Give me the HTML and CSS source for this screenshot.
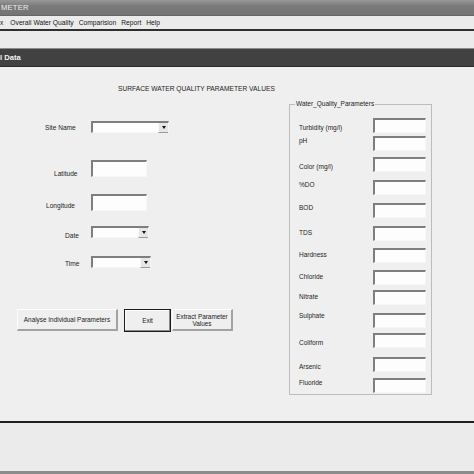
FILE: index.html
```html
<!DOCTYPE html>
<html lang="en">
<head>
  <meta charset="UTF-8" />
  <meta name="viewport" content="width=device-width, initial-scale=1.0"/>
  <title>Water Quality Parameter</title>
  <link rel="stylesheet" href="styles.css">
</head>
<body>
  <div class="window">
    <div class="titlebar">METER</div>

    <div class="menubar">
      <span class="menu-cut">x</span>
      <span>Overall Water Quality</span>
      <span>Comparision</span>
      <span>Report</span>
      <span>Help</span>
    </div>

    <div class="toolbar"></div>

    <div class="caption">l Data</div>

    <div class="content">
      <div class="left">
        <h1>SURFACE WATER QUALITY PARAMETER VALUES</h1>

        <div class="row row-site">
          <label class="lbl lbl-site">Site Name</label>
          <div class="combo combo-site"><span class="drop"><span class="tri"></span></span></div>
        </div>

        <div class="row row-lat">
          <label class="lbl lbl-lat">Latitude</label>
          <input type="text" class="field" />
        </div>

        <div class="row row-lon">
          <label class="lbl lbl-lon">Longitude</label>
          <input type="text" class="field" />
        </div>

        <div class="row row-date">
          <label class="lbl lbl-date">Date</label>
          <div class="combo combo-date"><span class="drop"><span class="tri"></span></span></div>
        </div>

        <div class="row row-time">
          <label class="lbl lbl-time">Time</label>
          <div class="combo combo-time"><span class="drop"><span class="tri"></span></span></div>
        </div>

        <div class="buttons">
          <button class="btn btn-analyse">Analyse Individual Parameters</button>
          <button class="btn btn-exit">Exit</button>
          <button class="btn btn-extract">Extract Parameter<br>Values</button>
        </div>
      </div>

      <fieldset class="params">
        <legend>Water_Quality_Parameters</legend>
        <div class="param-grid">
          <label class="plbl lo">Turbidity (mg/l)</label><input type="text" class="pfield" />
          <label class="plbl hi">pH</label><input type="text" class="pfield" />
          <label class="plbl lo">Color (mg/l)</label><input type="text" class="pfield" />
          <label class="plbl hi">%DO</label><input type="text" class="pfield" />
          <label class="plbl hi">BOD</label><input type="text" class="pfield" />
          <label class="plbl">TDS</label><input type="text" class="pfield" />
          <label class="plbl">Hardness</label><input type="text" class="pfield" />
          <label class="plbl">Chloride</label><input type="text" class="pfield" />
          <label class="plbl">Nitrate</label><input type="text" class="pfield" />
          <label class="plbl top">Sulphate</label><input type="text" class="pfield" />
          <label class="plbl lo">Coliform</label><input type="text" class="pfield" />
          <label class="plbl lo">Arsenic</label><input type="text" class="pfield" />
          <label class="plbl hi">Fluoride</label><input type="text" class="pfield" />
        </div>
      </fieldset>
    </div>

    <div class="status"></div>
    <div class="bottombar"></div>
  </div>
</body>
</html>
```

FILE: styles.css
```css
body {
  margin: 0;
  width: 474px;
  height: 474px;
  overflow: hidden;
  background-color: #efefef;
  font-family: "Liberation Sans", Arial, sans-serif;
  color: #1e1e1e;
}

.window {
  display: flex;
  flex-direction: column;
  height: 474px;
}

.titlebar {
  height: 16px;
  box-sizing: border-box;
  padding: 3px 0 0 1px;
  background: linear-gradient(#989898, #7a7a7a 40%, #747474 100%);
  border-bottom: 1px solid #666;
  color: #eeeeee;
  font-size: 7.6px;
  line-height: 10px;
  letter-spacing: 0.2px;
}

.menubar {
  height: 13px;
  display: flex;
  align-items: center;
  gap: 5px;
  background-color: #ebebeb;
  font-size: 6.7px;
  color: #151515;
}

.menu-cut {
  margin-left: 0;
  margin-right: 2px;
}

.toolbar {
  height: 17px;
  border-top: 2px solid #2f2f2f;
  background-color: #ebebeb;
}

.caption {
  height: 19px;
  box-sizing: border-box;
  border-top: 1px solid #8c8c8c;
  border-bottom: 1px solid #2a2a2a;
  background-color: #414141;
  color: #f2f2f2;
  font-size: 7.6px;
  font-weight: bold;
  line-height: 17px;
}

.content {
  flex: 1;
  display: flex;
  background-color: #efefef;
}

.left {
  width: 289px;
  padding-top: 18px;
}

h1 {
  margin: 0 0 0 118px;
  font-size: 6.65px;
  font-weight: normal;
  line-height: 8px;
  white-space: nowrap;
  color: #222;
}

.row {
  display: flex;
  align-items: flex-start;
}

.row-site { margin-top: 28px; }
.row-lat { margin-top: 27px; }
.row-lon { margin-top: 16px; }
.row-date { margin-top: 15px; }
.row-time { margin-top: 16px; }

.lbl {
  width: 91px;
  box-sizing: border-box;
  font-size: 6.6px;
  line-height: 8px;
  white-space: nowrap;
}

.lbl-site { padding-left: 45px; margin-top: 3px; }
.lbl-lat { padding-left: 54px; margin-top: 10px; }
.lbl-lon { padding-left: 46px; margin-top: 8px; }
.lbl-date { padding-left: 65px; margin-top: 6px; }
.lbl-time { padding-left: 65px; margin-top: 4px; }

.field, .pfield, .combo {
  box-sizing: border-box;
  margin: 0;
  padding: 0;
  background-color: #fdfdfd;
  border-top: 2px solid #7e7e7e;
  border-left: 2px solid #7e7e7e;
  border-right: 1px solid #f6f6f6;
  border-bottom: 1px solid #f6f6f6;
  border-radius: 0;
  outline: none;
}

.field {
  width: 56px;
  height: 17px;
}

.combo {
  height: 12px;
  display: flex;
  justify-content: flex-end;
}

.combo-site { width: 78px; }
.combo-date { width: 58px; }
.combo-time { width: 60px; }

.drop {
  width: 9px;
  height: 9px;
  display: flex;
  align-items: center;
  justify-content: center;
  background-color: #e6e6e6;
  border-left: 1px solid #f8f8f8;
  border-bottom: 1px solid #9a9a9a;
}

.tri {
  width: 0;
  height: 0;
  border-left: 2.5px solid transparent;
  border-right: 2.5px solid transparent;
  border-top: 3px solid #111;
}

.buttons {
  display: flex;
  align-items: flex-start;
  margin: 41px 0 0 17px;
}

.btn {
  box-sizing: border-box;
  height: 22px;
  margin: 0;
  padding: 0;
  background-color: #efefef;
  border-top: 1px solid #fdfdfd;
  border-left: 1px solid #fdfdfd;
  border-right: 2px solid #a2a2a2;
  border-bottom: 2px solid #a2a2a2;
  font-family: "Liberation Sans", Arial, sans-serif;
  font-size: 6.4px;
  line-height: 7px;
  color: #1a1a1a;
}

.btn-analyse {
  width: 101px;
  margin-right: 6px;
}

.btn-exit {
  width: 47px;
  height: 23px;
  border: 1px solid #1c1c1c;
  box-shadow: inset -1px -1px 0 #8a8a8a, inset 1px 1px 0 #fdfdfd;
  margin-right: 1px;
}

.btn-extract {
  width: 61px;
}

.params {
  box-sizing: border-box;
  width: 143px;
  margin: 33px 0 0 0;
  padding: 10px 0 0 9px;
  border: 1px solid #bcbcbc;
  align-self: flex-start;
  min-inline-size: 0;
}

.params legend {
  margin-left: -4px;
  padding: 0 1px;
  font-size: 6.5px;
  line-height: 8px;
  color: #222;
}

.param-grid {
  display: grid;
  grid-template-columns: 74px 53px;
  grid-template-rows: 18px 21px 23px 23px 23px 22px 22px 20px 23px 20px 24px 21px 16px;
}

.plbl {
  margin-top: 3px;
  font-size: 6.5px;
  line-height: 8px;
  white-space: nowrap;
}

.plbl.lo { margin-top: 6px; }
.plbl.hi { margin-top: 1px; }
.plbl.top { margin-top: -1px; }

.pfield {
  width: 53px;
  height: 15px;
}

.status {
  height: 48px;
  border-top: 2px solid #202020;
  background-color: #ebebeb;
}

.bottombar {
  height: 3px;
  background-color: #8c8c8c;
}
```
